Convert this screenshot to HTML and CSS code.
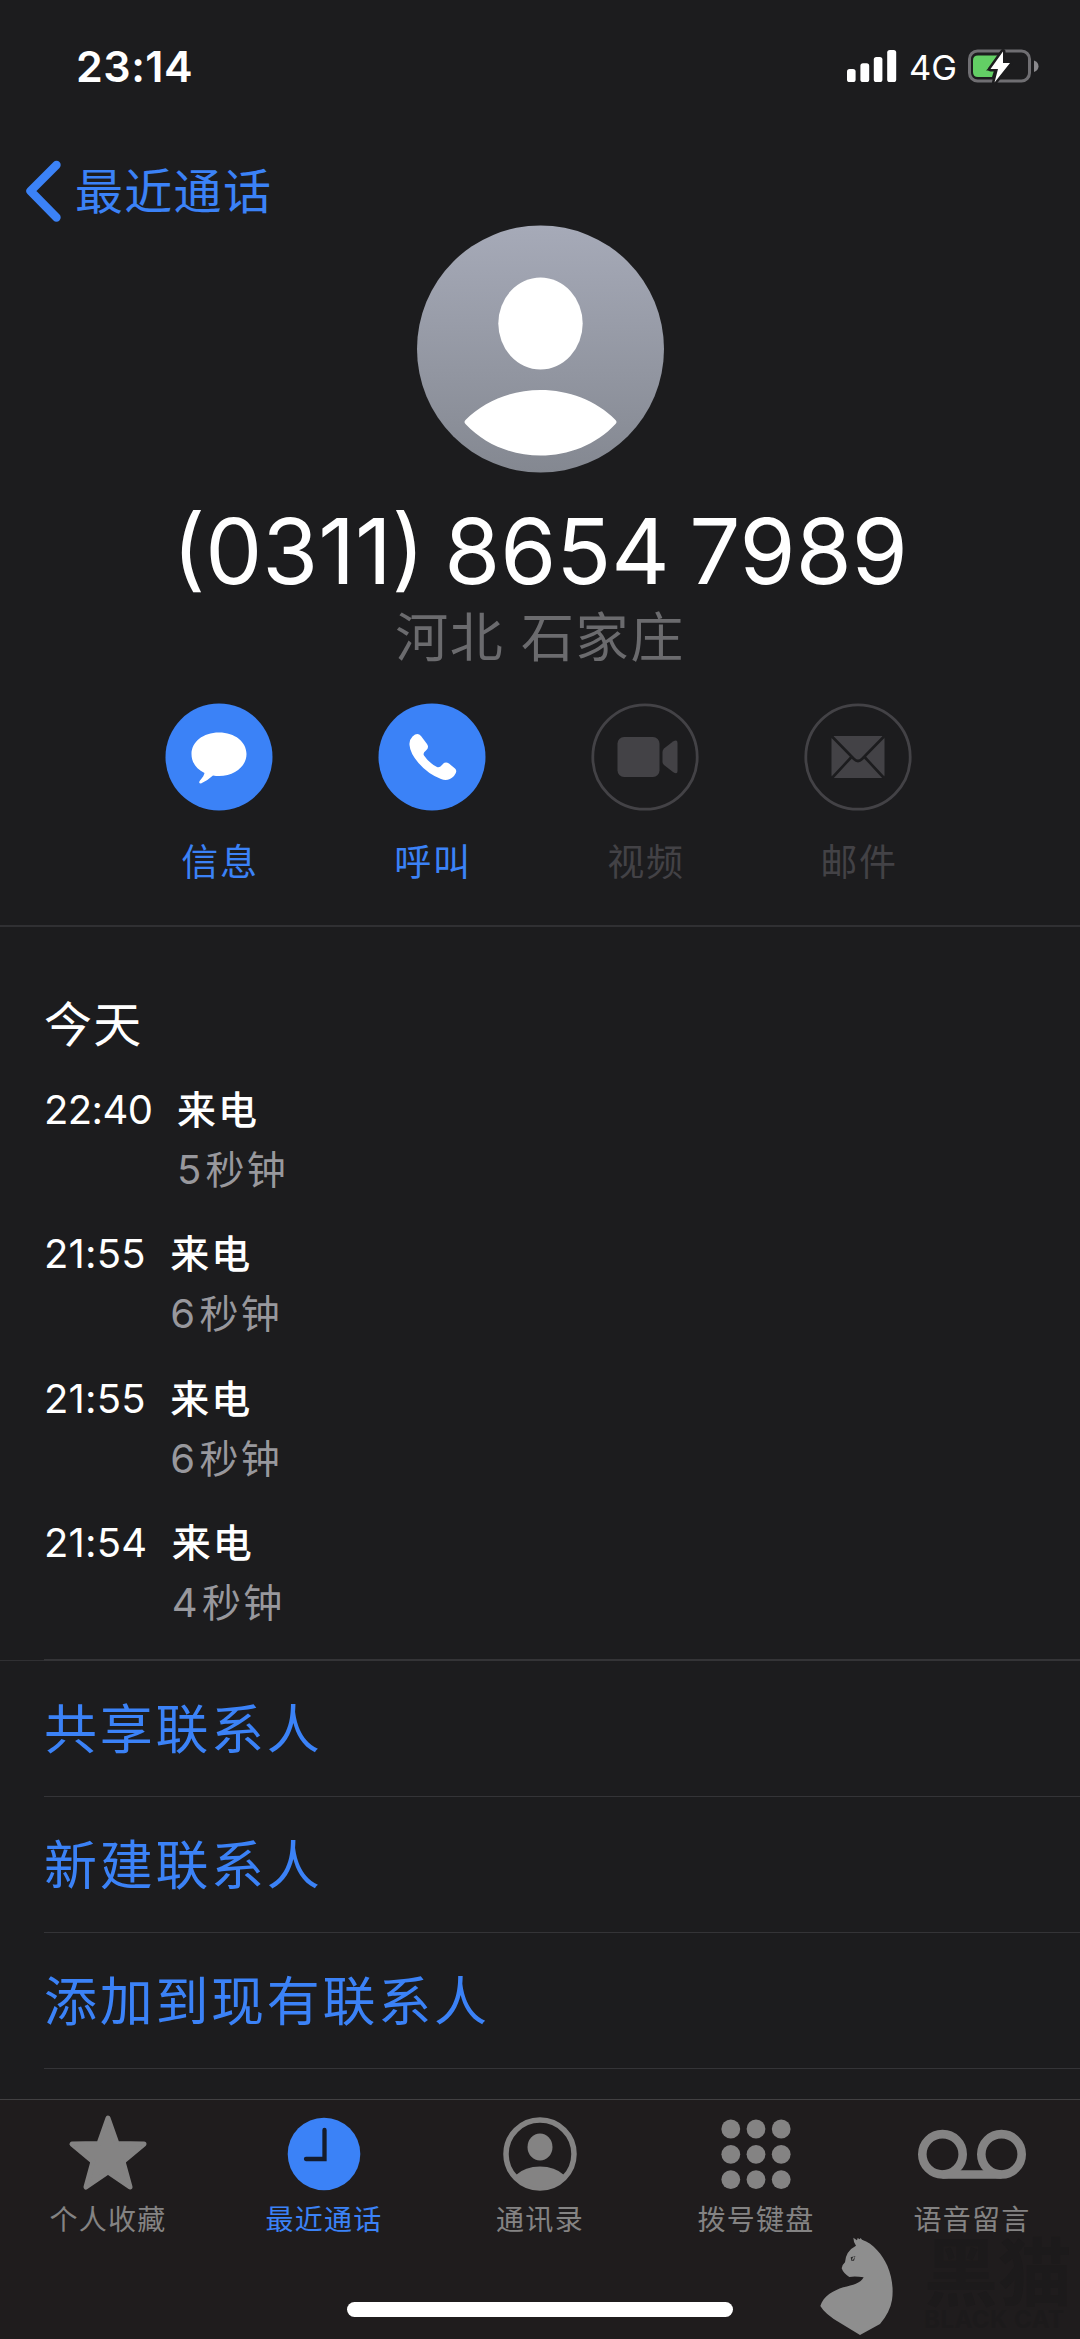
FILE: index.html
```html
<!DOCTYPE html>
<html lang="zh-CN">
<head>
<meta charset="utf-8">
<title>最近通话</title>
<link rel="stylesheet" href="styles.css">
</head>
<body>
<div class="screen">
  <header class="status">
    <span class="clock">23:14</span>
    <div class="indicators">
      <svg class="signal" width="50" height="32" viewBox="0 0 50 32" fill="#fff">
        <rect x="0" y="19" width="8.6" height="13" rx="2.6"/><rect x="13.4" y="13.3" width="8.8" height="18.7" rx="2.6"/><rect x="26.8" y="7" width="8.6" height="25" rx="2.6"/><rect x="40.2" y="0" width="9" height="32" rx="2.6"/>
      </svg>
      <span class="network">4G</span>
      <svg class="battery" width="72" height="38" viewBox="0 0 72 38">
        <rect x="2.5" y="4" width="60" height="30" rx="8" fill="none" stroke="#6f6e72" stroke-width="3"/>
        <path d="M67 13.5c6 2 6 9.5 0 11.500z" fill="#8a898d"/>
        <path d="M11 8.500h23l-15 15h8l-2 6.500H11q-5 0-5-5v-11.500q0-5 5-5z" fill="#63cf65"/>
        <path d="M36 4.500L23.500 22h7.500L27.500 35.500L43 16h-7z" fill="#fff" stroke="#1c1c1e" stroke-width="5" paint-order="stroke" stroke-linejoin="round"/>
      </svg>
    </div>
  </header>

  <nav class="back">
    <svg width="38" height="66" viewBox="0 0 38 66"><path d="M32.500 7L6.500 33L32.500 59.500" fill="none" stroke="#3b82f7" stroke-width="8.400" stroke-linecap="round" stroke-linejoin="round"/></svg>
    <span class="back-label">最近通话</span>
  </nav>

  <section class="profile">
    <svg class="avatar" width="248" height="248" viewBox="0 0 248 248">
      <defs><linearGradient id="shade" x1="0" y1="0" x2="0" y2="1"><stop offset="0" stop-color="#a6aab8"/><stop offset="1" stop-color="#848891"/></linearGradient></defs>
      <circle cx="124.500" cy="124" r="123.500" fill="url(#shade)"/>
      <ellipse cx="124.500" cy="98.500" rx="42.200" ry="46" fill="#fff"/>
      <path d="M49.500 195C88.500 155 160.500 155 199.500 195Q201.500 197 199.500 199C160.500 241 88.500 241 49.500 199Q47.500 197 49.500 195z" fill="#fff"/>
    </svg>
    <h1 class="number">(0311) 8654 7989</h1>
    <p class="place">河北 石家庄</p>
  </section>

  <section class="actions">
    <div class="action">
      <svg width="108" height="108" viewBox="0 0 108 108"><circle cx="54" cy="54" r="53.500" fill="#3b82f7"/><path d="M54 29.500C70 29.500 81.500 39 81.500 51S70 73 54 73q-3 0-6-.500Q42 78 36 80.500Q33 80.500 35 77.500Q39 73 39.500 70C31 66 26.500 59 26.500 51C26.500 39 38 29.500 54 29.500z" fill="#fff"/></svg>
      <span>信息</span>
    </div>
    <div class="action">
      <svg width="108" height="108" viewBox="0 0 108 108"><circle cx="54" cy="54" r="53.500" fill="#3b82f7"/><path d="M34.500 33.500Q39.500 29 43 33L49 41Q51.500 44.500 48 47.500Q44.500 50 46 52.500Q51 60 59 64Q61.500 65 64 62Q67 58 71 60.500L77 65.500Q80 68.500 76 73Q70 79 63 76Q50 71 40.500 60Q32 50 31.500 42Q31 37 34.500 33.500z" fill="#fff"/></svg>
      <span>呼叫</span>
    </div>
    <div class="action off">
      <svg width="108" height="108" viewBox="0 0 108 108"><circle cx="54" cy="54" r="52.200" fill="none" stroke="#434246" stroke-width="2.800"/><rect x="26.500" y="34" width="42" height="40" rx="6.500" fill="#434246"/><path d="M71.500 49Q71.500 47 73 45.500L82 38.500Q86.500 36 86.500 40V68Q86.500 72 82 69L73 62Q71.500 60.500 71.500 59z" fill="#434246"/></svg>
      <span>视频</span>
    </div>
    <div class="action off">
      <svg width="108" height="108" viewBox="0 0 108 108"><circle cx="54" cy="54" r="52.200" fill="none" stroke="#434246" stroke-width="2.800"/><rect x="27.500" y="33" width="53" height="42" rx="3" fill="#434246"/><path d="M28 33.500L50 56Q54 60 58 56L80 33.500M28 75L47 54.500M80 75L61 54.500" fill="none" stroke="#1c1c1e" stroke-width="2.600"/></svg>
      <span>邮件</span>
    </div>
  </section>

  <section class="history">
    <h2>今天</h2>
    <div class="call"><time class="tight">22:40</time><div><b>来电</b><small><i>5</i>秒钟</small></div></div>
    <div class="call"><time>21:55</time><div><b>来电</b><small><i>6</i>秒钟</small></div></div>
    <div class="call"><time>21:55</time><div><b>来电</b><small><i>6</i>秒钟</small></div></div>
    <div class="call"><time>21:54</time><div><b>来电</b><small><i>4</i>秒钟</small></div></div>
  </section>

  <section class="links">
    <a>共享联系人</a>
    <a>新建联系人</a>
    <a>添加到现有联系人</a>
  </section>

  <footer class="dock">
    <div class="tabs">
      <div class="tab">
        <svg width="84" height="80" viewBox="0 0 84 80"><path d="M42 6L51 31.500L78 32L57 49.500L64 75L42 60L20 75L27 49.500L6 32L33 31.500z" fill="#848383" stroke="#848383" stroke-width="5" stroke-linejoin="round"/></svg>
        <span>个人收藏</span>
      </div>
      <div class="tab current">
        <svg width="84" height="80" viewBox="0 0 84 80"><circle cx="42" cy="42" r="36.300" fill="#3b82f7"/><path d="M42.500 18V47H24" fill="none" stroke="#151c2b" stroke-width="4.300" stroke-linecap="round" stroke-linejoin="miter"/></svg>
        <span>最近通话</span>
      </div>
      <div class="tab">
        <svg width="84" height="80" viewBox="0 0 84 80"><circle cx="42" cy="42" r="34" fill="none" stroke="#848383" stroke-width="5.500"/><ellipse cx="42" cy="35" rx="12.500" ry="13.600" fill="#848383"/><path d="M18 63Q27 54.500 42 54.500T66 63Q56 76 42 76T18 63z" fill="#848383"/></svg>
        <span>通讯录</span>
      </div>
      <div class="tab">
        <svg width="84" height="80" viewBox="0 0 84 80" fill="#848383"><circle cx="16.800" cy="17" r="9.400"/><circle cx="42" cy="17" r="9.400"/><circle cx="67.200" cy="17" r="9.400"/><circle cx="16.800" cy="42.300" r="9.400"/><circle cx="42" cy="42.300" r="9.400"/><circle cx="67.200" cy="42.300" r="9.400"/><circle cx="16.800" cy="67.600" r="9.400"/><circle cx="42" cy="67.600" r="9.400"/><circle cx="67.200" cy="67.600" r="9.400"/></svg>
        <span>拨号键盘</span>
      </div>
      <div class="tab">
        <svg width="110" height="80" viewBox="0 0 110 80" fill="none" stroke="#848383" stroke-width="8.600"><circle cx="25.500" cy="42.300" r="20.200"/><circle cx="84.500" cy="42.300" r="20.200"/><path d="M25.500 62.500H84.500"/></svg>
        <span>语音留言</span>
      </div>
    </div>
    <div class="home"></div>
  </footer>

  <div class="watermark">
    <svg width="90" height="114" viewBox="0 0 270 342" overflow="visible"><path d="M160 38L171 46L173 39L179 43L182 39L186 44C220 55 248 90 262 122C276 155 281 190 276 225Q270 262 240 297L180 330L122 295Q75 268 61 243C70 213 100 197 130 187C160 180 180 176 191 157Q165 153 148 156Q130 145 125 130Q125 121 135 112Q137 78 168 62Q160 50 160 38z" fill="#8e8e8e"/><path d="M152 97L166 93L162 107L154 107z" fill="#2b2a2b"/><path d="M157 104L163 95" stroke="#8e8e8e" stroke-width="4"/></svg>
    <div class="brand"><b>黑猫</b><span>BLACK CAT</span></div>
  </div>
</div>
</body>
</html>
```
FILE: styles.css
```css
* { box-sizing: border-box; margin: 0; padding: 0; }
body {
  background: #1c1c1e;
  font-family: Inter, "Noto Sans CJK SC", sans-serif;
  color: #fff;
}
svg { display: block; flex: none; }
.screen {
  position: relative;
  width: 1080px;
  height: 2339px;
  overflow: hidden;
  display: flex;
  flex-direction: column;
  white-space: nowrap;
}

.status {
  height: 143px;
  padding: 0 41px 11px 76px;
  display: flex;
  align-items: center;
  justify-content: space-between;
}
.clock { font-size: 43px; font-weight: 600; line-height: 50px; letter-spacing: .5px; }
.indicators { display: flex; align-items: center; }
.network { font-size: 34.500px; line-height: 40px; margin: 3px 10px 0 12px; }

.back { height: 81px; padding: 0 0 0 24px; display: flex; align-items: center; margin-top: 7px; margin-bottom: -6px; }
.back-label { margin-left: 13px; padding-top: 2px; font-size: 48px; letter-spacing: 1.3px; color: #3b82f7; line-height: 66px; }

.profile { height: 476px; display: flex; flex-direction: column; align-items: center; }
.number { font-size: 90.500px; font-weight: 400; word-spacing: -6px; line-height: 110px; margin-top: 23px; }
.place { font-size: 53px; letter-spacing: 1.6px; line-height: 60px; padding-top: 2px; color: #6b6b6e; }

.actions {
  height: 226px;
  padding: 2px 114px 0 112px;
  display: grid;
  grid-template-columns: repeat(4, 213px);
  border-bottom: 2px solid #303033;
}
.action { display: flex; flex-direction: column; align-items: center; color: #3b82f7; font-size: 37px; letter-spacing: 1.8px; }
.action span { margin: 24px 0 0 3px; line-height: 56px; }
.off { color: #434246; }

.history { height: 732px; padding: 62px 44px 0; }
h2 { font-size: 48px; font-weight: 400; letter-spacing: 1.3px; line-height: 72px; margin-bottom: -1px; }
.call { display: flex; gap: 24.500px; height: 144.3px; padding-top: 20px; font-size: 39px; }
time { font-size: 40px; line-height: 60px; letter-spacing: .2px; }
.tight { letter-spacing: -.6px; }
.call b { display: block; font-weight: 500; letter-spacing: 2px; line-height: 60px; }
.call small { display: flex; font-size: 39px; letter-spacing: 2.300px; line-height: 60px; color: #98989d; }
.call i { font-style: normal; font-size: 40px; margin-right: 2px; }

.links { height: 440px; padding-left: 44px; background: linear-gradient(#303033, #303033) 0 1px / 44px 1px no-repeat; }
.links a { display: block; height: 136.500px; border-top: 2px solid #343437; color: #3b82f7; font-size: 53px; letter-spacing: 2.700px; line-height: 138px; }
.links a + a { border-top: 1px solid #343437; }
.links a:last-child { border-bottom: 1px solid #343437; }

.dock { flex: 1; background: #1f1c1d; border-top: 1px solid #414042; display: flex; flex-direction: column; align-items: center; }
.tabs { align-self: stretch; height: 202px; padding-top: 12px; display: grid; grid-template-columns: repeat(5, 216px); }
.tab { display: flex; flex-direction: column; align-items: center; color: #848383; }
.tab span { font-size: 28px; letter-spacing: 1.300px; line-height: 30px; margin-top: 13px; }
.current span { color: #3b82f7; }
.home { width: 386px; height: 15px; border-radius: 8px; background: #fff; }

.watermark { position: absolute; left: 800px; top: 2225px; width: 280px; display: flex; }
.brand { display: flex; flex-direction: column; margin-left: 34px; padding-top: 14px; color: #1c1a1b; }
.brand b { font-size: 74px; line-height: 68px; }
.brand span { font-size: 24px; font-weight: 700; line-height: 26px; letter-spacing: .5px; }
```
